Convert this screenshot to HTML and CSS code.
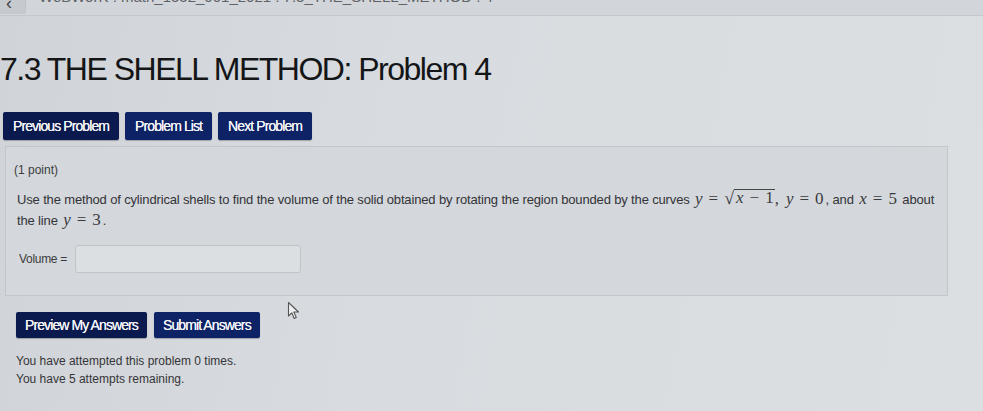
FILE: index.html
```html
<!DOCTYPE html>
<html lang="en">
<head>
<meta charset="utf-8">
<title>WeBWorK : 7.3 THE SHELL METHOD: Problem 4</title>
<link rel="stylesheet" href="styles.css">
</head>
<body>
<header class="chrome">
  <div class="back">&lsaquo;</div>
  <div class="tabbar"><span class="tabtext">WeBWorK : math_1552_001_2021 : 7.3_THE_SHELL_METHOD : 4</span></div>
</header>
<main class="page">
  <h1 class="title">7.3 THE SHELL METHOD: Problem 4</h1>
  <nav class="nav">
    <a class="btn btn-dark">Previous Problem</a>
    <a class="btn">Problem List</a>
    <a class="btn">Next Problem</a>
  </nav>
  <section class="problem">
    <p class="points">(1 point)</p>
    <p class="statement">Use the method of cylindrical shells to find the volume of the solid obtained by rotating the region bounded by the curves <span class="m"><i>y</i><span class="op">=</span><span class="sqrt"><span class="rs">√</span><span class="rad"><i>x</i><span class="op">−</span>1</span></span>,<span class="sp"></span><i>y</i><span class="op">=</span>0</span>, and <span class="m"><i>x</i><span class="op">=</span>5</span> about<br>the line <span class="m"><i>y</i><span class="op">=</span>3</span>.</p>
    <div class="answer">
      <label class="label" for="ans">Volume =</label>
      <input class="input" id="ans" type="text">
    </div>
  </section>
  <div class="submit">
    <a class="btn btn-dark btn-sm">Preview My Answers</a>
    <a class="btn btn-sm">Submit Answers</a>
  </div>
  <div class="attempts">
    <p>You have attempted this problem 0 times.</p>
    <p>You have 5 attempts remaining.</p>
  </div>
  <svg class="cursor" width="14" height="20" viewBox="0 0 14 20"><path d="M1.5 1.5 L1.5 15 L4.8 11.8 L7.2 17.5 L9.3 16.6 L6.9 11 L11.5 11 Z" fill="#eef0f2" stroke="#555" stroke-width="1.1" stroke-linejoin="round"/></svg>
</main>
</body>
</html>
```
FILE: styles.css
```css
html, body {
  margin: 0;
  padding: 0;
}
body {
  width: 983px;
  height: 411px;
  overflow: hidden;
  background: linear-gradient(100deg, #d0d3d7 0%, #d8dbdf 40%, #dcdfe2 100%);
  font-family: "Liberation Sans", Arial, sans-serif;
  color: #333;
}
.chrome {
  display: flex;
  height: 15px;
  border-bottom: 1px solid #c4c7cb;
  background: #d2d5d9;
}
.back {
  width: 25px;
  height: 18px;
  margin-top: -4px;
  background: #c6c9cd;
  border-right: 1px solid #bfc2c6;
  border-radius: 0 0 3px 0;
  color: #444;
  font-size: 18px;
  line-height: 14px;
  text-indent: 6px;
  overflow: hidden;
}
.tabbar {
  flex: 1;
  overflow: hidden;
  padding-left: 13px;
}
.tabtext {
  display: block;
  margin-top: -12px;
  font-size: 15px;
  line-height: 18px;
  color: #5f6266;
  white-space: nowrap;
}
.page {
  position: relative;
  display: flow-root;
  padding: 0 3px;
}
.title {
  margin: 34px 0 0 -3px;
  font-size: 32px;
  letter-spacing: -1.5px;
  line-height: 38px;
  font-weight: normal;
  color: #141517;
}
.nav {
  display: flex;
  gap: 6px;
  margin-top: 24px;
}
.btn {
  display: inline-flex;
  align-items: center;
  height: 28px;
  padding: 0 10px;
  box-sizing: border-box;
  background: #0e2366;
  color: #f2f4f8;
  font-size: 14px;
  letter-spacing: -0.9px;
  text-shadow: 0 0 0.6px #ffffff;
  border-radius: 2px;
  box-shadow: 0 1px 1px rgba(0,0,0,0.25);
  white-space: nowrap;
}
.btn-dark {
  background: #0b1a4e;
}
.btn-sm {
  height: 26px;
  padding: 0 9px;
}
.problem {
  margin: 6px 32px 0 2px;
  height: 150px;
  box-sizing: border-box;
  padding: 14px 10px 0 8px;
  background: #d4d7db;
  border: 1px solid #c3c7cb;
}
.problem p {
  margin: 0;
}
.points {
  font-size: 12px;
  line-height: 18px;
  color: #3c3d40;
}
.statement {
  margin-top: 10px !important;
  padding-left: 3px;
  font-size: 13px;
  letter-spacing: -0.15px;
  line-height: 21px;
  color: #333438;
}
.m {
  font-family: "Liberation Serif", "Times New Roman", serif;
  font-size: 17px;
  line-height: 15px;
  letter-spacing: 0;
  color: #3a3b3e;
  white-space: nowrap;
  margin: 0 2px;
}
.m i {
  font-style: italic;
}
.op {
  padding: 0 6px;
}
.sp {
  display: inline-block;
  width: 7px;
}
.sqrt {
  display: inline-flex;
  align-items: flex-end;
}
.rs {
  font-size: 18px;
}
.rad {
  border-top: 1px solid #444;
  line-height: 16px;
  padding: 0 1px 0 2px;
}
.answer {
  display: flex;
  align-items: center;
  gap: 6px;
  margin-top: 14px;
  padding-left: 5px;
}
.label {
  font-size: 12px;
  letter-spacing: -0.3px;
  color: #3a3b3e;
}
.input {
  width: 226px;
  height: 28px;
  box-sizing: border-box;
  border: 1px solid #c0c4c8;
  border-radius: 3px;
  background: #dcdfe2;
  margin: 0 0 0 2px;
}
.submit {
  display: flex;
  gap: 7px;
  margin: 16px 0 0 13px;
}
.attempts {
  margin: 14px 0 0 13px;
  font-size: 12px;
  line-height: 18px;
  color: #343538;
}
.attempts p {
  margin: 0;
}
.cursor {
  position: absolute;
  left: 287px;
  top: 285px;
}
```
